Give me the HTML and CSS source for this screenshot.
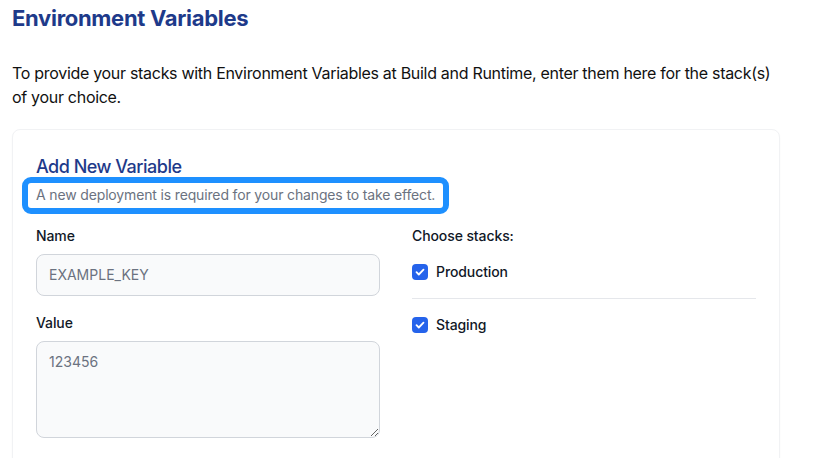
FILE: index.html
```html
<!DOCTYPE html>
<html lang="en">
<head>
<meta charset="utf-8">
<title>Environment Variables</title>
<link rel="stylesheet" href="styles.css">
</head>
<body>
<main class="page">
  <h1 class="title">Environment Variables</h1>
  <p class="intro">To provide your stacks with Environment Variables at Build and Runtime, enter them here for the stack(s) of your choice.</p>
  <section class="card">
    <h2 class="card-title">Add New Variable</h2>
    <p class="notice">A new deployment is required for your changes to take effect.</p>
    <div class="form-grid">
      <div class="fields">
        <label class="field-label" for="name">Name</label>
        <input class="input" id="name" type="text" placeholder="EXAMPLE_KEY">
        <label class="field-label field-label-gap" for="value">Value</label>
        <textarea class="input textarea" id="value" placeholder="123456"></textarea>
      </div>
      <div class="stacks">
        <div class="field-label">Choose stacks:</div>
        <label class="stack-option">
          <span class="check"><svg viewBox="0 0 16 16" width="16" height="16"><path d="M4.5 8.2l2.3 2.3 4.7-4.8" fill="none" stroke="#fff" stroke-width="1.8" stroke-linecap="round" stroke-linejoin="round"/></svg></span>
          <span class="stack-name">Production</span>
        </label>
        <div class="divider"></div>
        <label class="stack-option">
          <span class="check"><svg viewBox="0 0 16 16" width="16" height="16"><path d="M4.5 8.2l2.3 2.3 4.7-4.8" fill="none" stroke="#fff" stroke-width="1.8" stroke-linecap="round" stroke-linejoin="round"/></svg></span>
          <span class="stack-name">Staging</span>
        </label>
      </div>
    </div>
  </section>
</main>
</body>
</html>
```
FILE: styles.css
```css
* { box-sizing: border-box; }
html, body { margin: 0; padding: 0; background: #fff; }
body {
  font-family: Inter, "Noto Sans", "Liberation Sans", sans-serif;
  color: #111827;
}
.page {
  width: 768px;
  margin-left: 12px;
}
.title {
  margin: 0;
  padding-top: 4px;
  font-size: 22px;
  line-height: 28px;
  font-weight: 700;
  color: #1e3a8a;
  letter-spacing: -0.3px;
}
.intro {
  margin: 29px 0 0;
  font-size: 16px;
  line-height: 24px;
  color: #111111;
  letter-spacing: -0.3px;
}
.card {
  margin-top: 20px;
  border: 1px solid #f1f2f4;
  border-radius: 8px;
  box-shadow: 0 1px 2px rgba(0, 0, 0, 0.03);
  padding: 23px 23px 24px;
  height: 340px;
}
.card-title {
  margin: 0;
  font-size: 18px;
  line-height: 28px;
  font-weight: 500;
  color: #1e3a8a;
  letter-spacing: -0.5px;
}
.notice {
  display: inline-block;
  margin: 2px -8px 0;
  padding: 2px 8px 3px;
  font-size: 14px;
  line-height: 20px;
  color: #6b7280;
  letter-spacing: -0.15px;
  outline: 6px solid #1e90ff;
  border-radius: 3px;
}
.form-grid {
  display: grid;
  grid-template-columns: 1fr 1fr;
  column-gap: 32px;
  margin-top: 18px;
}
.fields { display: flex; flex-direction: column; }
.field-label {
  display: block;
  font-size: 14px;
  line-height: 20px;
  font-weight: 500;
  color: #111827;
  letter-spacing: -0.1px;
}
.field-label-gap { margin-top: 17px; }
.input {
  display: block;
  width: 100%;
  margin-top: 8px;
  padding: 10px 12px;
  font-family: inherit;
  font-size: 14px;
  line-height: 20px;
  color: #111827;
  background: #f9fafb;
  border: 1px solid #d1d5db;
  border-radius: 8px;
}
.input::placeholder { color: #6b7280; opacity: 1; }
.textarea { height: 97px; resize: vertical; }
.stacks { display: flex; flex-direction: column; }
.stack-option {
  display: flex;
  align-items: center;
  gap: 8px;
  margin-top: 16px;
}
.check {
  width: 16px;
  height: 16px;
  border-radius: 4px;
  background: #2563eb;
  display: flex;
}
.stack-name {
  font-size: 14px;
  line-height: 20px;
  font-weight: 500;
  color: #111827;
  letter-spacing: -0.1px;
}
.divider {
  height: 1px;
  background: #e5e7eb;
  margin-top: 16px;
}
```
